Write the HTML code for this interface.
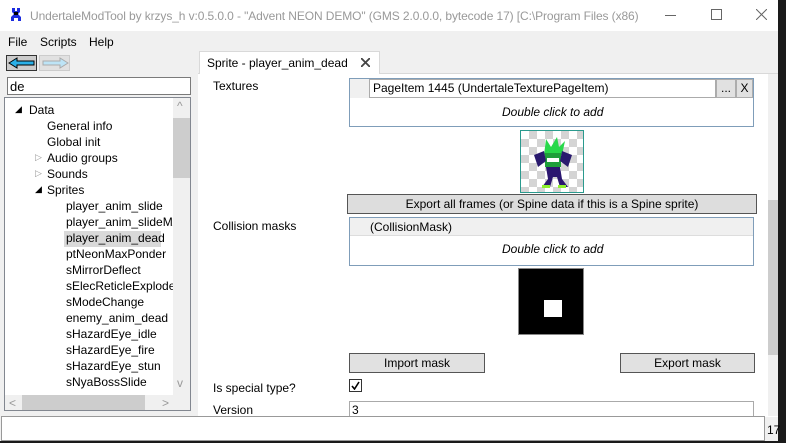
<html><head><style>
body{margin:0;width:786px;height:443px;overflow:hidden;background:#1a1a1a;font-family:"Liberation Sans",sans-serif;font-size:12px;color:#000;position:relative}
.a{position:absolute}
.btn{position:absolute;background:#e1e1e1;border:1px solid #adadad;box-sizing:border-box;text-align:center}
.t{position:absolute;white-space:nowrap}
</style></head><body>
<div class="a" style="left:0;top:0;width:778px;height:441px;background:#f0f0f0"></div>
<div class="a" style="left:0;top:0;width:778px;height:31px;background:#fff"></div>
<svg class="a" style="left:9px;top:7px" width="14" height="16" viewBox="0 0 14 16"><path d="M3 1h3v3h2V1h3v4l-2 2 3 3v4h-3v-3H5v3H2v-4l3-3-2-2z" fill="#1b2be0"/><rect x="5" y="5" width="4" height="3" fill="#000"/></svg>
<div class="t" style="left:30px;top:9px;font-size:12px;color:#999;letter-spacing:-0.1px;width:608px;overflow:hidden">UndertaleModTool by krzys_h v:0.5.0.0 - "Advent NEON DEMO" (GMS 2.0.0.0, bytecode 17) [C:\Program Files (x86)\...</div>
<div class="a" style="left:665px;top:15px;width:11px;height:1px;background:#666"></div>
<div class="a" style="left:711px;top:9px;width:9px;height:9px;border:1px solid #666"></div>
<svg class="a" style="left:756px;top:9px" width="11" height="11"><path d="M0 0L11 11M11 0L0 11" stroke="#666" stroke-width="1"/></svg>
<div class="t" style="left:8px;top:35px;font-size:12px">File</div>
<div class="t" style="left:40px;top:35px;font-size:12px">Scripts</div>
<div class="t" style="left:89px;top:35px;font-size:12px">Help</div>
<div class="a" style="left:6px;top:55px;width:31px;height:16px;background:#ccc;border:1px solid #333;box-sizing:border-box"></div>
<svg class="a" style="left:8px;top:57px" width="28" height="12"><path d="M1 6l8-5v3h17v4H9v3z" fill="#2ab0e8" stroke="#000"/></svg>
<div class="a" style="left:39px;top:55px;width:31px;height:16px;background:#e1e1e1;border:1px solid #ccc;box-sizing:border-box"></div>
<svg class="a" style="left:41px;top:57px" width="28" height="12"><path d="M27 6l-8-5v3H2v4h17v3z" fill="#bde4f6" stroke="#aaa"/></svg>
<div class="a" style="left:7px;top:77px;width:184px;height:18px;background:#fff;border:1px solid #7a7a7a;box-sizing:border-box"></div>
<div class="t" style="left:10px;top:79px;font-size:13px">de</div>
<div class="a" style="left:4px;top:97px;width:187px;height:314px;background:#fff;border:1px solid #828790;box-sizing:border-box"></div>
<div class="a" style="left:173px;top:98px;width:17px;height:297px;background:#f0f0f0"></div>
<div class="a" style="left:173px;top:118px;width:17px;height:60px;background:#cdcdcd"></div>
<div class="t" style="left:177px;top:99px;color:#999">^</div>
<div class="t" style="left:177px;top:376px;color:#999">v</div>
<div class="a" style="left:5px;top:395px;width:185px;height:15px;background:#f0f0f0"></div>
<div class="a" style="left:22px;top:395px;width:123px;height:15px;background:#cdcdcd"></div>
<div class="t" style="left:9px;top:396px;color:#999">&lt;</div><div class="t" style="left:162px;top:396px;color:#999">&gt;</div>
<div class="a" style="left:5px;top:98px;width:168px;height:297px;overflow:hidden;font-size:12px">
<div class="t" style="left:10px;top:6px;font-size:9px">◢</div>
<div class="t" style="left:24px;top:5px">Data</div>
<div class="t" style="left:42px;top:21px">General info</div>
<div class="t" style="left:42px;top:37px">Global init</div>
<div class="t" style="left:30px;top:54px;font-size:9px;color:#999">▷</div><div class="t" style="left:42px;top:53px">Audio groups</div>
<div class="t" style="left:30px;top:70px;font-size:9px;color:#999">▷</div><div class="t" style="left:42px;top:69px">Sounds</div>
<div class="t" style="left:30px;top:86px;font-size:9px">◢</div><div class="t" style="left:42px;top:85px">Sprites</div>
<div class="a" style="left:59px;top:133px;width:97px;height:16px;background:#d9d9d9"></div>
<div class="t" style="left:61px;top:101px">player_anim_slide</div>
<div class="t" style="left:61px;top:117px">player_anim_slideMAX</div>
<div class="t" style="left:61px;top:133px">player_anim_dead</div>
<div class="t" style="left:61px;top:149px">ptNeonMaxPonder</div>
<div class="t" style="left:61px;top:165px">sMirrorDeflect</div>
<div class="t" style="left:61px;top:181px">sElecReticleExplode</div>
<div class="t" style="left:61px;top:197px">sModeChange</div>
<div class="t" style="left:61px;top:213px">enemy_anim_dead</div>
<div class="t" style="left:61px;top:229px">sHazardEye_idle</div>
<div class="t" style="left:61px;top:245px">sHazardEye_fire</div>
<div class="t" style="left:61px;top:261px">sHazardEye_stun</div>
<div class="t" style="left:61px;top:277px">sNyaBossSlide</div>
</div>
<div class="a" style="left:198px;top:73px;width:580px;height:343px;background:#fff;border-top:1px solid #d9d9d9"></div>
<div class="a" style="left:199px;top:51px;width:181px;height:23px;background:#fff;border:1px solid #d9d9d9;border-bottom:none;box-sizing:border-box"></div>
<div class="t" style="left:207px;top:56px;font-size:12px">Sprite - player_anim_dead</div>
<svg class="a" style="left:361px;top:58px" width="9" height="9"><path d="M0 0L9 9M9 0L0 9" stroke="#444" stroke-width="1.8"/></svg>
<div class="a" style="left:768px;top:74px;width:10px;height:342px;background:#f0f0f0"></div>
<div class="a" style="left:768px;top:200px;width:10px;height:155px;background:#cdcdcd"></div>
<div class="t" style="left:213px;top:79px">Textures</div>
<div class="a" style="left:349px;top:78px;width:405px;height:49px;border:1px solid #7f9db9;box-sizing:border-box"></div>
<div class="a" style="left:350px;top:79px;width:403px;height:19px;background:#f0f0f0"></div>
<div class="a" style="left:369px;top:79px;width:347px;height:19px;background:#fff;border:1px solid #ababab;box-sizing:border-box"></div>
<div class="t" style="left:373px;top:81px">PageItem 1445 (UndertaleTexturePageItem)</div>
<div class="btn" style="left:716px;top:79px;width:20px;height:19px;line-height:17px">...</div>
<div class="btn" style="left:736px;top:79px;width:17px;height:19px;line-height:17px">X</div>
<div class="t" style="left:502px;top:105px;font-style:italic">Double click to add</div>
<div class="a" style="left:520px;top:130px;width:64px;height:63px;border:1px solid #2a9a8e;box-sizing:border-box;background-color:#fff;background-image:linear-gradient(45deg,#d4d4d4 25%,transparent 25%,transparent 75%,#d4d4d4 75%),linear-gradient(45deg,#d4d4d4 25%,transparent 25%,transparent 75%,#d4d4d4 75%);background-size:16px 16px;background-position:0 0,8px 8px"></div>
<svg class="a" style="left:530px;top:133px" width="46" height="58"><path d="M14 22l2-16 5 8 6-10 2 10 6-6-3 14z" fill="#28d84a"/><rect x="15" y="20" width="16" height="14" fill="#1e9e3a"/><path d="M4 22l10-4 2 10-8 6zM42 22l-10-4-2 10 8 6z" fill="#2a1a6e"/><rect x="17" y="25" width="12" height="4" fill="#fff"/><path d="M16 34h14l2 12 6 8h-8l-3-10h-4l-3 10H12l6-8z" fill="#2b1670"/><rect x="12" y="52" width="8" height="3" fill="#8ef030"/><rect x="28" y="52" width="8" height="3" fill="#8ef030"/></svg>
<div class="btn" style="left:347px;top:194px;width:410px;height:20px;line-height:18px;border-color:#555;background:#ddd">Export all frames (or Spine data if this is a Spine sprite)</div>
<div class="t" style="left:213px;top:219px">Collision masks</div>
<div class="a" style="left:349px;top:217px;width:405px;height:49px;border:1px solid #7f9db9;box-sizing:border-box"></div>
<div class="a" style="left:350px;top:218px;width:403px;height:17px;background:#f0f0f0;border-bottom:1px solid #ddd"></div>
<div class="t" style="left:370px;top:220px">(CollisionMask)</div>
<div class="t" style="left:502px;top:242px;font-style:italic">Double click to add</div>
<div class="a" style="left:518px;top:268px;width:66px;height:67px;background:#000;border:1px solid #888;box-sizing:border-box"></div>
<div class="a" style="left:544px;top:300px;width:18px;height:17px;background:#fff"></div>
<div class="btn" style="left:349px;top:353px;width:136px;height:20px;line-height:18px;border-color:#555">Import mask</div>
<div class="btn" style="left:620px;top:353px;width:135px;height:20px;line-height:18px;border-color:#555">Export mask</div>
<div class="t" style="left:213px;top:381px">Is special type?</div>
<div class="a" style="left:349px;top:379px;width:13px;height:13px;border:1px solid #333;box-sizing:border-box;background:#fff"></div>
<svg class="a" style="left:351px;top:381px" width="9" height="9"><path d="M1 5l2.5 3L8 1" stroke="#000" stroke-width="1.6" fill="none"/></svg>
<div class="t" style="left:213px;top:403px">Version</div>
<div class="a" style="left:349px;top:401px;width:405px;height:16px;border:1px solid #aaa;box-sizing:border-box;background:#fff"></div>
<div class="t" style="left:352px;top:403px">3</div>
<div class="a" style="left:1px;top:416px;width:764px;height:25px;background:#fff;border:1px solid #999;box-sizing:border-box"></div>
<div class="t" style="left:767px;top:423px">17</div>
</body></html>
